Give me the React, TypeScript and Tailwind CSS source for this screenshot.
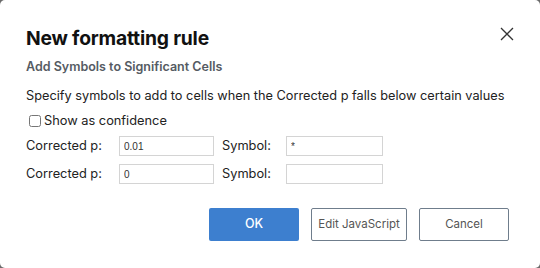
import React from "react";

function Row({ p, sym }: { p: string; sym: string }) {
  return (
    <div className="flex items-center h-[20px]">
      <span className="w-[93px] text-[12.8px] text-[#222]">Corrected p:</span>
      <input
        defaultValue={p}
        className="w-[95px] h-[20px] border border-[#d4d4d4] px-[4px] text-[10px] text-[#333] font-['Liberation_Sans',sans-serif] outline-none"
      />
      <span className="ml-[8px] w-[64px] text-[12.8px] text-[#222]">Symbol:</span>
      <input
        defaultValue={sym}
        className="w-[97px] h-[20px] border border-[#d4d4d4] px-[4px] text-[10px] text-[#333] font-['Liberation_Sans',sans-serif] outline-none"
      />
    </div>
  );
}

export default function App() {
  return (
    <div className="w-[540px] h-[268px] bg-[#6b6b6b] font-['Inter',sans-serif]">
      <div className="relative w-full h-full bg-white rounded-[5px] px-[26px] pt-[25px]">
        <button className="absolute right-[26px] top-[27px] text-[#333]">
          <svg width="14" height="14" viewBox="0 0 14 14" fill="none" stroke="currentColor" strokeWidth="1.3">
            <path d="M1 1L13 13M13 1L1 13" />
          </svg>
        </button>
        <h1 className="text-[19.3px] font-bold text-[#111] leading-[26px] tracking-[-0.2px]">New formatting rule</h1>
        <div className="mt-[8px] text-[12.5px] font-semibold text-[#555b63] leading-[16px]">
          Add Symbols to Significant Cells
        </div>
        <p className="mt-[12px] text-[12.75px] text-[#222] leading-[17px]">
          Specify symbols to add to cells when the Corrected p falls below certain values
        </p>
        <label className="mt-[8px] flex items-center gap-[3px] text-[12.8px] text-[#222] leading-[17px]">
          <input type="checkbox" className="ml-[3px] w-[12px] h-[12px]" />
          Show as confidence
        </label>
        <div className="mt-[7px] flex flex-col gap-[8px]">
          <Row p="0.01" sym="*" />
          <Row p="0" sym="" />
        </div>
        <div className="mt-[24px] flex justify-end gap-[12px] mr-[5px]">
          <button className="w-[90px] h-[33px] rounded-[2px] bg-[#3d7fcf] text-white text-[12.5px] font-medium">OK</button>
          <button className="w-[96px] h-[33px] rounded-[2px] border border-[#6f7d8c] text-[#555] text-[11.5px]">
            Edit JavaScript
          </button>
          <button className="w-[90px] h-[33px] rounded-[2px] border border-[#6f7d8c] text-[#555] text-[11.5px]">
            Cancel
          </button>
        </div>
      </div>
    </div>
  );
}
